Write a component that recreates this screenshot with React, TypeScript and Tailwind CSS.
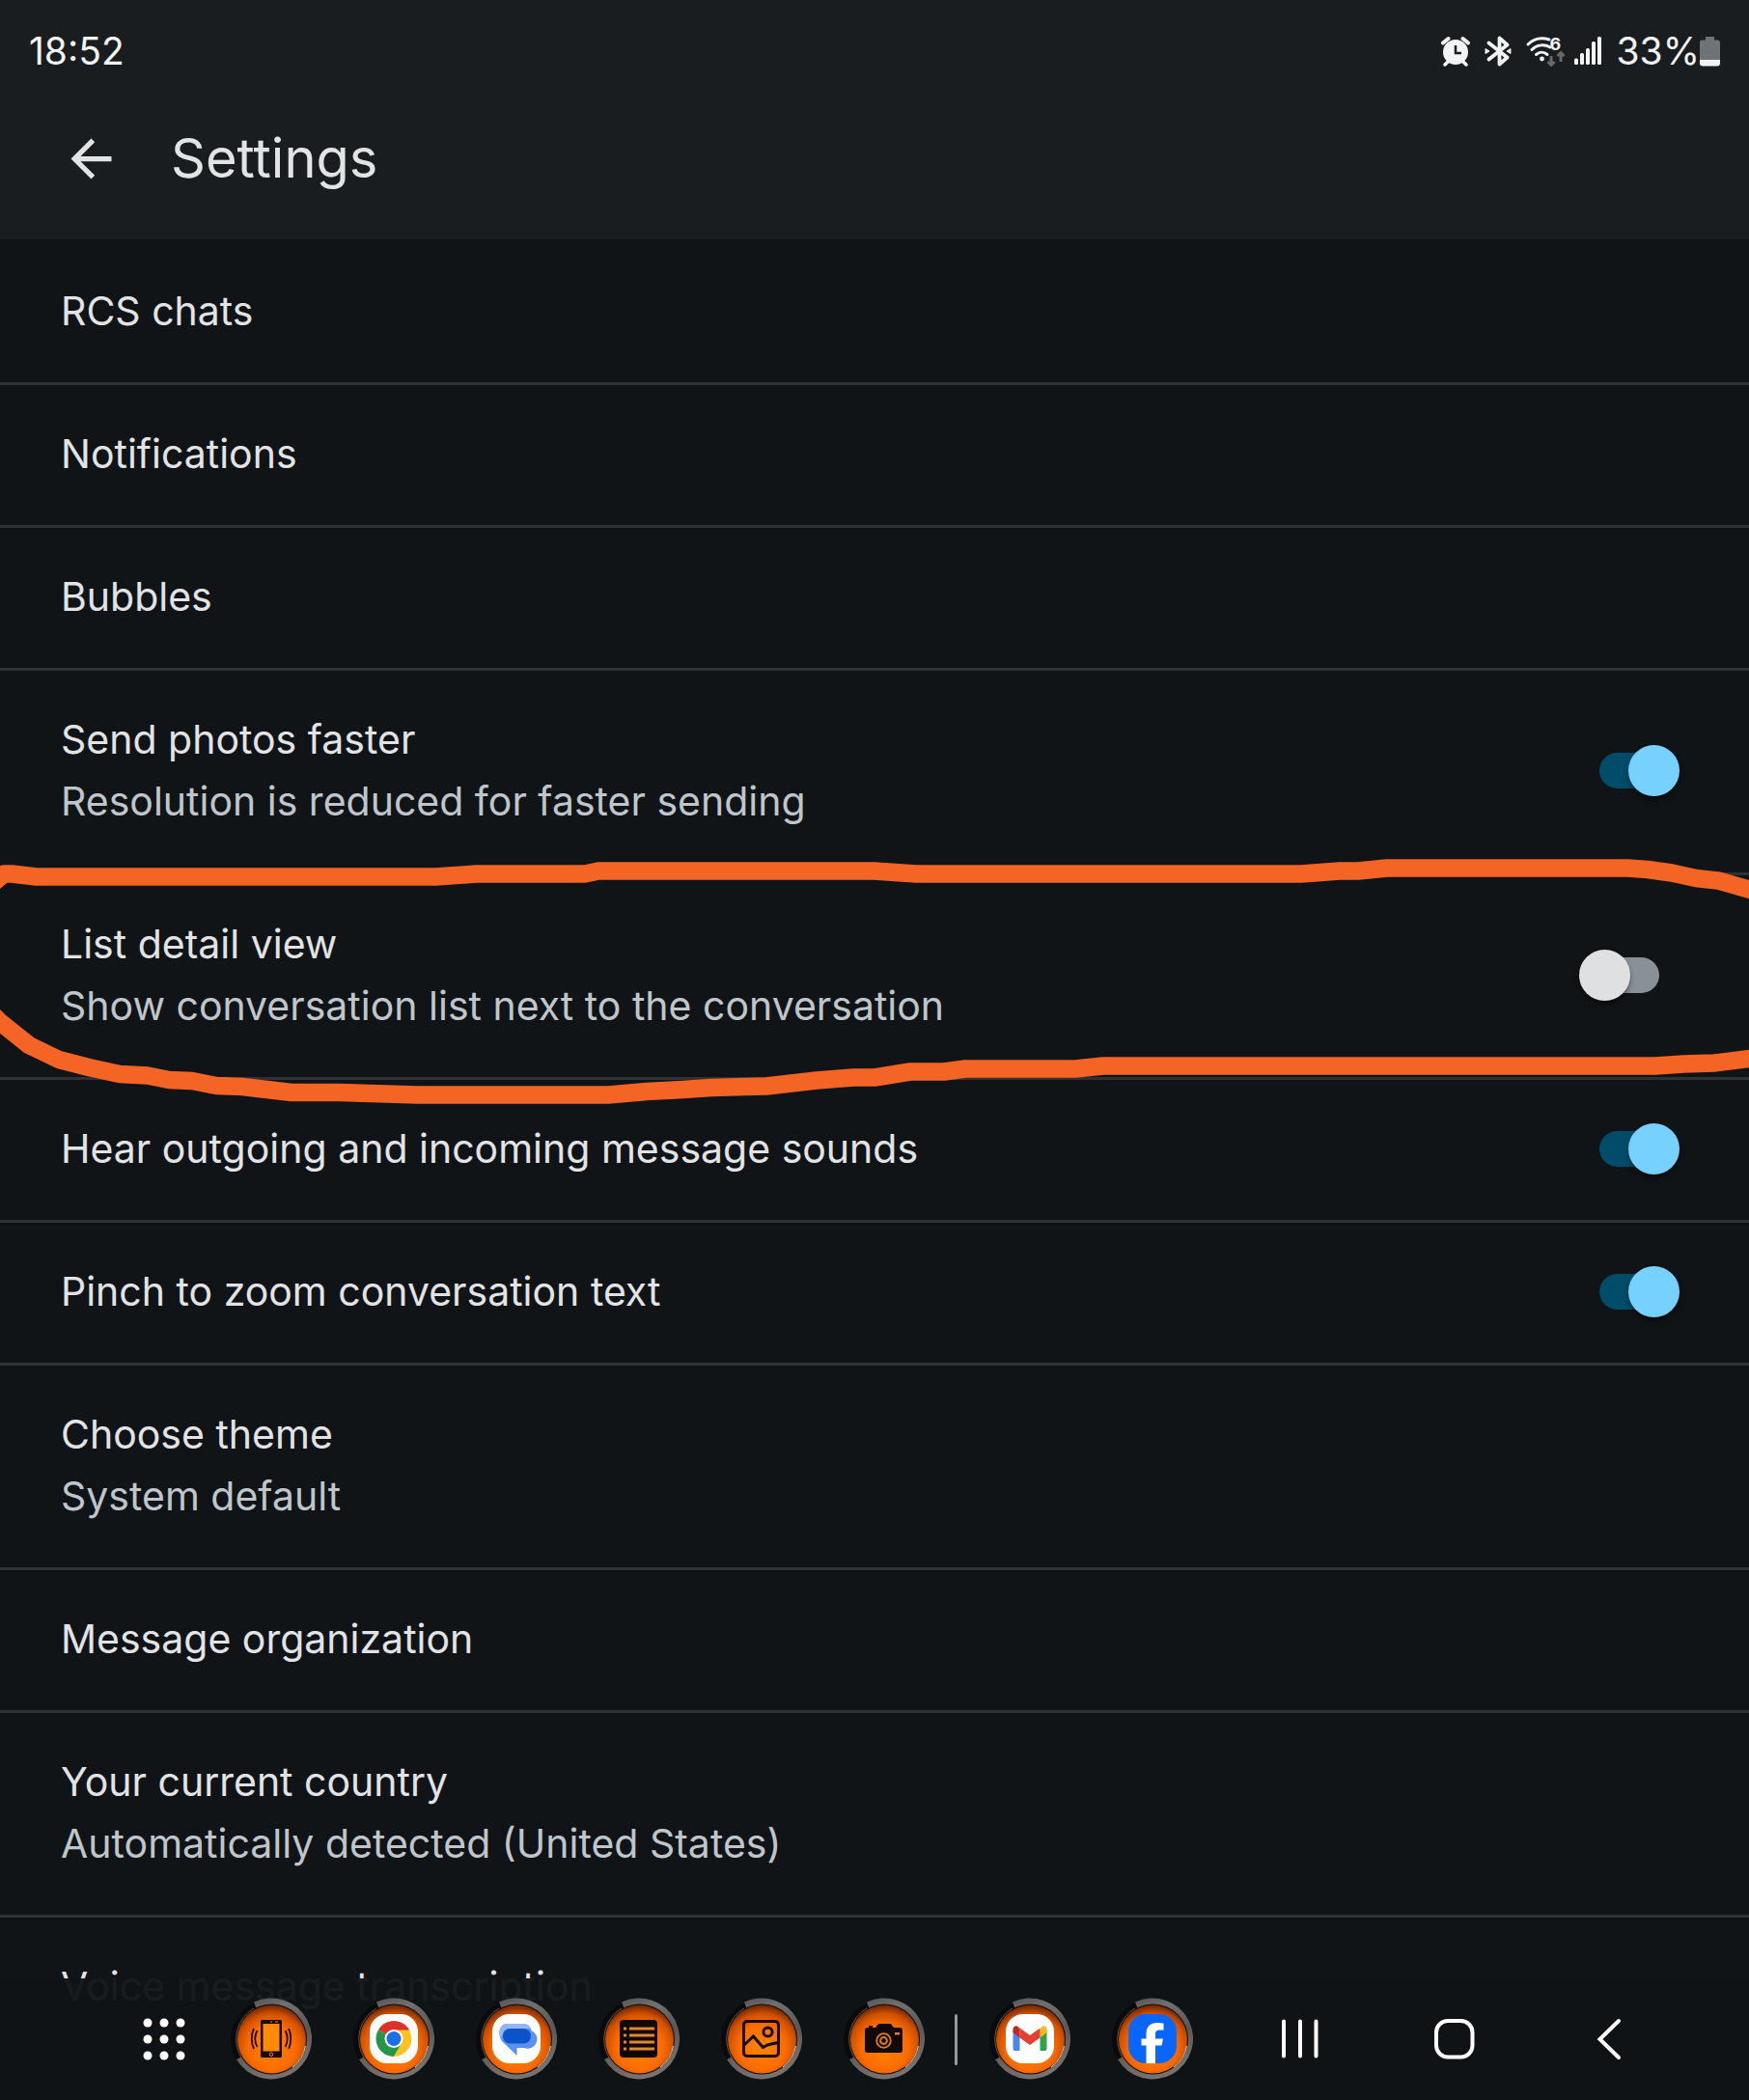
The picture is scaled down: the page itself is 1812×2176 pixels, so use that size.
import { useId, useState } from 'react';
import type { ReactNode } from 'react';

type Setting = {
  title: string;
  summary?: string;
  enabled?: boolean;
  marked?: boolean;
};

const settings: Setting[] = [
  { title: 'RCS chats' },
  { title: 'Notifications' },
  { title: 'Bubbles' },
  { title: 'Send photos faster', summary: 'Resolution is reduced for faster sending', enabled: true },
  { title: 'List detail view', summary: 'Show conversation list next to the conversation', enabled: false, marked: true },
  { title: 'Hear outgoing and incoming message sounds', enabled: true },
  { title: 'Pinch to zoom conversation text', enabled: true },
  { title: 'Choose theme', summary: 'System default' },
  { title: 'Message organization' },
  { title: 'Your current country', summary: 'Automatically detected (United States)' },
  { title: 'Voice message transcription' },
];

function StatusBar() {
  return (
    <div className="flex h-[106px] items-center justify-between px-[30px] text-[39px] text-[#f1f3f4]">
      <span>18:52</span>
      <div className="flex items-center">
        {/* Alarm */}
        <svg className="mr-[15px] h-8 w-[30px]" viewBox="0 0 30 32" fill="none">
          <circle cx="15" cy="17" r="13" fill="#f1f3f4" />
          <path d="M2 7.500L7.500 3M28 7.500L22.500 3" stroke="#f1f3f4" strokeWidth="4" strokeLinecap="round" />
          <path d="M7 27l-3 3M23 27l3 3" stroke="#f1f3f4" strokeWidth="3.500" strokeLinecap="round" />
          <path d="M15 10v8h6" stroke="#191d1f" strokeWidth="2.500" />
        </svg>
        {/* Bluetooth */}
        <svg className="mr-[15px] h-8 w-7" viewBox="0 0 28 32" fill="none" stroke="#f1f3f4">
          <path d="M4.500 7.500L23.500 22.500L15.500 29.500V2.500L23.500 9.500L4.500 24.500" strokeWidth="3.800" strokeLinejoin="round" strokeLinecap="round" />
          <path d="M1 13.500L5 16L1 18.500ZM27 13.500L23 16L27 18.500Z" fill="#f1f3f4" strokeWidth="1" strokeLinejoin="round" />
        </svg>
        {/* Wi-Fi 6 */}
        <svg className="mr-[9px] h-8 w-[41px] overflow-visible" viewBox="0 0 41 32" fill="none" strokeLinecap="round">
          <path d="M2 9C8 3 16 1.500 24 4" stroke="#f1f3f4" strokeWidth="3" />
          <path d="M6 14.500C11.500 9 19 8.500 25 12" stroke="#f1f3f4" strokeWidth="3" />
          <path d="M10.500 19.500C14 16.500 18.500 16.500 22 19.500" stroke="#f1f3f4" strokeWidth="3" />
          <circle cx="16.500" cy="24" r="2.400" fill="#f1f3f4" />
          <text x="24.500" y="15" fontSize="18" fontWeight="700" fill="#f1f3f4">6</text>
          <path d="M26 21v9M22.500 27l3.500 3.500l3.500-3.500M36 27V18M32.500 21L36 17.500L39.500 21" stroke="#66696b" strokeWidth="3" strokeLinecap="butt" />
        </svg>
        {/* Signal */}
        <svg className="mr-4 h-8 w-7" viewBox="0 0 28 32" fill="#f1f3f4">
          <rect x="0" y="23.500" width="4" height="6.500" rx="1.500" />
          <rect x="6" y="18" width="4" height="12" rx="1.500" />
          <rect x="12" y="13" width="4" height="17" rx="1.500" />
          <rect x="18" y="6" width="4" height="24" rx="1.500" />
          <rect x="24" y="1" width="4" height="29" rx="1.500" />
        </svg>
        <span>33%</span>
        <svg className="h-8 w-[21px]" viewBox="0 0 21 32">
          <path d="M6 1h9v3.500h3.500a2.500 2.500 0 0 1 2.500 2.500V25H0V7a2.500 2.500 0 0 1 2.500-2.500H6z" fill="#707375" />
          <path d="M0 25h21v3.500a3 3 0 0 1-3 3H3a3 3 0 0 1-3-3z" fill="#f1f3f4" />
        </svg>
      </div>
    </div>
  );
}

function Toggle({ id, defaultOn }: { id: string; defaultOn: boolean }) {
  const [on, setOn] = useState(defaultOn);

  return (
    <span className="relative flex h-[53px] w-[104px] shrink-0 items-center">
      <input
        id={id}
        type="checkbox"
        role="switch"
        checked={on}
        onChange={() => setOn(!on)}
        className="absolute inset-0 z-10 cursor-pointer opacity-0"
      />
      <span className={`mx-auto h-[37px] w-[62px] rounded-full ${on ? 'bg-[#004c69]' : 'bg-[#899096]'}`}></span>
      <span
        className={`absolute top-0 h-[53px] w-[53px] rounded-full shadow-md shadow-black/40 ${on ? 'right-0 bg-[#76d1ff]' : 'left-0 bg-[#dfe0e2]'}`}
      ></span>
    </span>
  );
}

/* Pen strokes above and below a row */
function Marker() {
  return (
    <svg
      className="pointer-events-none absolute -top-[23px] left-0 z-10 h-[264px] w-full"
      viewBox="0 884 1812 264"
      preserveAspectRatio="none"
      fill="none"
      stroke="#f46424"
      strokeWidth="18.500"
      strokeLinejoin="round"
    >
      <path d="M-6 914L4 905.500H12L38 908.500H451L494 905.500H606L620 902.500H906L949 905.500H1348L1388 902.500H1407L1437 899.500H1686L1707 901L1732 904.500L1757 910L1780 912.500L1820 924" />
      <path d="M-10 1049L0 1059L30 1083L61 1098L92 1106L124 1113L153 1114.500L175 1119L199 1120L224 1125L251 1126L302 1132H352L432 1134.500H630L670 1131L708 1129L737 1127L794 1125.500L846 1119.500L884 1116.500H906L943 1110.500H978L1000 1107.500H1114L1143 1104.500H1715L1744 1102.500L1776 1101.500L1820 1096" />
    </svg>
  );
}

function SettingRow({ title, summary, enabled, marked }: Setting) {
  const id = useId();
  const text = (
    <>
      <span className="block text-[#e1e3e5]">{title}</span>
      {summary && <span className="block text-[#bfc6cb]">{summary}</span>}
    </>
  );

  return (
    <li className="relative flex items-center justify-between border-t-[3px] border-[#2e3234] pb-[42px] pl-[63px] pr-[72px] pt-[39px] text-[41px] leading-[64px] first:border-transparent">
      {enabled === undefined ? (
        <button type="button" className="flex-1 text-left">{text}</button>
      ) : (
        <>
          <label htmlFor={id} className="flex-1">{text}</label>
          <Toggle id={id} defaultOn={enabled} />
        </>
      )}
      {marked && <Marker />}
    </li>
  );
}

function DockIcon({ label, children }: { label: string; children: ReactNode }) {
  return (
    <button type="button" aria-label={label} className="shrink-0">
      <svg className="h-[86px] w-[84px]" viewBox="0 0 84 86">
        <defs>
          <radialGradient id="glow" cx="0.5" cy="0.62" r="0.62">
            <stop offset="0" stopColor="#ff8400" />
            <stop offset="0.55" stopColor="#fb6c00" />
            <stop offset="0.8" stopColor="#cf5000" />
            <stop offset="1" stopColor="#6b2500" />
          </radialGradient>
          <linearGradient id="rim" x1="0" y1="0" x2="0.3" y2="1">
            <stop offset="0" stopColor="#4a4a4a" />
            <stop offset="0.25" stopColor="#707070" />
            <stop offset="0.6" stopColor="#5a5856" />
            <stop offset="1" stopColor="#77726e" />
          </linearGradient>
        </defs>
        <circle cx="41" cy="43" r="41" fill="#090a0b" />
        <path d="M24 4.500A42 42 0 1 1 6 64L14 60A34 34 0 1 0 27 12Z" fill="url(#rim)" />
        <circle cx="42.500" cy="43" r="36.500" fill="#140a06" />
        <path d="M24 11A37 37 0 0 0 11 62" fill="none" stroke="#5d5a58" strokeWidth="1" />
        <circle cx="42.500" cy="43" r="35.500" fill="url(#glow)" />
        <path d="M77.500 50A36 36 0 0 1 64 72" fill="none" stroke="#ffc9a0" strokeWidth="1" />
        {children}
      </svg>
    </button>
  );
}

function Dock() {
  return (
    <nav className="fixed inset-x-0 bottom-0 z-20 flex h-[126px] items-center bg-[#101416]/96 pl-32 pr-[65px]">
      <button type="button" aria-label="All apps" className="flex w-[84px] justify-center">
        <svg className="h-11 w-11" viewBox="0 0 44 44" fill="#ffffff">
          <circle cx="5" cy="5" r="4.500" /><circle cx="22" cy="5" r="4.500" /><circle cx="39" cy="5" r="4.500" />
          <circle cx="5" cy="22" r="4.500" /><circle cx="22" cy="22" r="4.500" /><circle cx="39" cy="22" r="4.500" />
          <circle cx="5" cy="39" r="4.500" /><circle cx="22" cy="39" r="4.500" /><circle cx="39" cy="39" r="4.500" />
        </svg>
      </button>

      <div className="ml-[27px] flex gap-[43px]">
        <DockIcon label="Phone">
          <rect x="31" y="23" width="22" height="39" rx="1.500" fill="#1a0b02" />
          <rect x="33.500" y="27" width="17" height="28.500" fill="#ff8a0a" />
          <circle cx="42" cy="58.700" r="1.800" fill="none" stroke="#ff8a0a" strokeWidth="1" />
          <path d="M41 25h2M46 25h3" stroke="#ff8a0a" strokeWidth="1" />
          <path d="M27.500 34C24.500 39 24.500 46 27.500 51M24 32C21 38 21 47 24 53M56.500 34C59.500 39 59.500 46 56.500 51M60 32C63 38 63 47 60 53" fill="none" stroke="#1a0b02" strokeWidth="1.800" />
        </DockIcon>
        <DockIcon label="Chrome">
          <rect x="17" y="17" width="50" height="51" rx="18" fill="#ffffff" />
          <path d="M42 42.500L26 33.250A18.500 18.500 0 0 1 58 33.250Z" fill="#db3327" />
          <path d="M42 42.500L26 33.250A18.500 18.500 0 0 0 42 61L50.500 47Z" fill="#279547" />
          <path d="M42 33.500H58A18.500 18.500 0 0 1 42 61L50 47Z" fill="#fcc31e" />
          <circle cx="42" cy="42.500" r="9.500" fill="#ffffff" />
          <circle cx="42" cy="42.500" r="7.500" fill="#1b6fe8" />
        </DockIcon>
        <DockIcon label="Messages">
          <rect x="17" y="17" width="50" height="51" rx="18" fill="#ffffff" />
          <path d="M33 27H49A9 9 0 0 1 57.500 34A9.500 9.500 0 0 1 50 52H42.500V60L28 46C23 41 22 27 33 27Z" fill="#5d90f5" />
          <path d="M33 27H49C53 27 55.500 29 57 32H35C31 32 29 34 28 38L26 42C23 35 25 27 33 27Z" fill="#93b5fa" />
          <rect x="28" y="32" width="29" height="15.500" rx="7.500" fill="#0b53c8" />
        </DockIcon>
        <DockIcon label="Notes">
          <rect x="22" y="23" width="39" height="39" rx="4" fill="#100703" />
          <path d="M26 32h3M32 32h26M26 39h3M32 39h26M26 46h3M32 46h26M26 53h3M32 53h26" stroke="#e0872c" strokeWidth="3" />
        </DockIcon>
        <DockIcon label="Gallery">
          <rect x="23.500" y="24.500" width="36" height="36" rx="3.500" fill="none" stroke="#170a03" strokeWidth="3" />
          <circle cx="48.500" cy="35.500" r="4.600" fill="none" stroke="#170a03" strokeWidth="3" />
          <path d="M24 49L33.500 40L43.500 51.500L48 49L59 46.500" fill="none" stroke="#170a03" strokeWidth="3" />
        </DockIcon>
        <DockIcon label="Camera">
          <path d="M25 31h1v-2h4v2h3l3-4h13l3 4h6a3 3 0 0 1 3 3V54a3 3 0 0 1-3 3H25a3 3 0 0 1-3-3V34a3 3 0 0 1 3-3z" fill="#120803" />
          <circle cx="41.500" cy="44.500" r="7.300" fill="none" stroke="#dd7d26" strokeWidth="1.800" />
          <circle cx="41.500" cy="44.500" r="3.400" fill="none" stroke="#dd7d26" strokeWidth="2" />
          <rect x="53" y="36" width="5" height="2.500" fill="#dd7d26" />
        </DockIcon>
      </div>

      <div className="ml-[31px] h-[53px] w-[3px] shrink-0 rounded-full bg-[#97999a]"></div>

      <div className="ml-[33px] flex gap-[43px]">
        <DockIcon label="Gmail">
          <rect x="17" y="17" width="50" height="51" rx="18" fill="#ffffff" />
          <path d="M24.500 33V53a2 2 0 0 0 2 2h5V39z" fill="#4a86f0" />
          <path d="M59.500 33V53a2 2 0 0 1-2 2h-5V39z" fill="#2fa24c" />
          <path d="M52.500 33.500L54 30.500C56.500 28 59.500 30 59.500 33V36L52.500 41.500Z" fill="#fabb12" />
          <path d="M31.500 33.500L30 30.500C27.500 28 24.500 30 24.500 33V36L31.500 41.500Z" fill="#c0281f" />
          <path d="M29 29.500L42 39L52.500 31.500V41.500L42 49L31.500 41.500V33Z" fill="#e5402f" />
        </DockIcon>
        <DockIcon label="Facebook">
          <rect x="17" y="17" width="50" height="51" rx="18" fill="#0a66fb" />
          <path d="M35.500 68V49.500H30.500V42.500H35.500V38C35.500 30 39.500 26 47 26C50 26 52 26.300 53.500 26.700V33.500H49.500C46 33.500 45 35 45 38V42.500H53L51.500 49.500H45V68Z" fill="#ffffff" />
        </DockIcon>
      </div>

      <div className="ml-auto flex">
        <button type="button" aria-label="Recent apps" className="flex w-40 justify-center">
          <svg className="h-11 w-11" viewBox="0 0 44 44" fill="none" stroke="#ffffff" strokeWidth="4" strokeLinecap="round">
            <path d="M5 3.500V39.500M22 3.500V39.500M38.500 3.500V39.500" />
          </svg>
        </button>
        <button type="button" aria-label="Home" className="flex w-40 justify-center">
          <svg className="h-11 w-11" viewBox="0 0 44 44" fill="none" stroke="#ffffff" strokeWidth="4">
            <rect x="3" y="3" width="37.500" height="37.500" rx="12" />
          </svg>
        </button>
        <button type="button" aria-label="Back" className="flex w-40 justify-center">
          <svg className="h-11 w-11" viewBox="0 0 44 44" fill="none" stroke="#ffffff" strokeWidth="4" strokeLinecap="round">
            <path d="M32 3L12.500 22L32 41" />
          </svg>
        </button>
      </div>
    </nav>
  );
}

export default function App() {
  return (
    <div className="min-h-screen overflow-x-hidden bg-[#101416] font-['Inter',sans-serif]">
      <header className="bg-[#191d1f] pb-[26px]">
        <StatusBar />
        <div className="flex h-[116px] items-center pl-[63px]">
          <button type="button" aria-label="Navigate up">
            <svg className="h-[63px] w-[63px]" viewBox="0 0 24 24" fill="#e1e3e5">
              <path d="M20 11H7.830l5.590-5.590L12 4l-8 8 8 8 1.410-1.410L7.830 13H20v-2z" />
            </svg>
          </button>
          <h1 className="ml-[51px] text-[56px] text-[#e1e3e5]">Settings</h1>
        </div>
      </header>

      <main>
        <ul>
          {settings.map((setting) => (
            <SettingRow key={setting.title} {...setting} />
          ))}
        </ul>
      </main>

      <Dock />
    </div>
  );
}
